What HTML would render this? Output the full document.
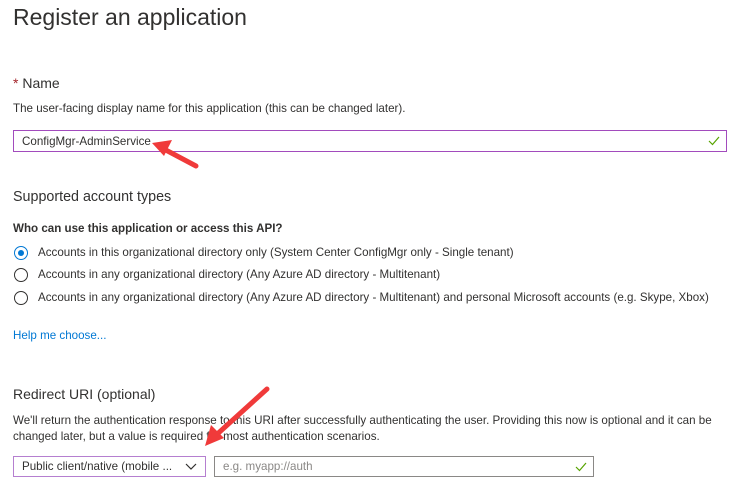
<!DOCTYPE html>
<html><head><style>
body{margin:0;width:740px;height:499px;background:#fff;font-family:"Liberation Sans",sans-serif;color:#323130;position:relative;overflow:hidden}
.a{position:absolute;white-space:nowrap}
.t{font-size:11.6px}
.box{position:absolute;border:1px solid #8a8886;box-sizing:border-box;font-size:11.6px}
.radio{position:absolute;width:14px;height:14px;border:1px solid #323130;border-radius:50%;box-sizing:border-box}
</style></head><body>
<div class="a" style="left:13px;top:4px;font-size:23px;">Register an application</div>
<div class="a" style="left:13px;top:75px;font-size:14px;"><span style="color:#a4262c">*</span> Name</div>
<div class="a t" style="left:13px;top:102px;">The user-facing display name for this application (this can be changed later).</div>
<div class="box" style="left:13px;top:130px;width:714px;height:22px;border-color:#a24bbd;">
<span class="a" style="left:8px;top:4px;">ConfigMgr-AdminService</span>
<svg class="a" style="right:6px;top:5px" width="12" height="10"><path d="M1 5 L4.5 8.5 L11 1" stroke="#57a300" stroke-width="1.2" fill="none"/></svg></div>
<div class="a" style="left:13px;top:189px;font-size:14.3px;">Supported account types</div>
<div class="a t" style="left:13px;top:222px;font-weight:bold;">Who can use this application or access this API?</div>
<div class="radio" style="left:14px;top:246px;border-color:#0078d4"><div style="position:absolute;left:3px;top:3px;width:6px;height:6px;border-radius:50%;background:#0078d4"></div></div>
<div class="a t" style="left:38px;top:246px;">Accounts in this organizational directory only (System Center ConfigMgr only - Single tenant)</div>
<div class="radio" style="left:14px;top:268px;"></div>
<div class="a t" style="left:38px;top:268px;">Accounts in any organizational directory (Any Azure AD directory - Multitenant)</div>
<div class="radio" style="left:14px;top:291px;"></div>
<div class="a t" style="left:38px;top:291px;">Accounts in any organizational directory (Any Azure AD directory - Multitenant) and personal Microsoft accounts (e.g. Skype, Xbox)</div>
<div class="a t" style="left:13px;top:329px;color:#0078d4;">Help me choose...</div>
<div class="a" style="left:13px;top:386px;font-size:14px;">Redirect URI (optional)</div>
<div class="a t" style="left:13px;top:413px;line-height:16px;">We'll return the authentication response to this URI after successfully authenticating the user. Providing this now is optional and it can be<br>changed later, but a value is required for most authentication scenarios.</div>
<div class="box" style="left:13px;top:456px;width:193px;height:21px;border-color:#b57fd0;">
<span class="a" style="left:8px;top:3px;">Public client/native (mobile ...</span>
<svg class="a" style="right:8px;top:6px" width="12" height="8"><path d="M1 1 L6 6 L11 1" stroke="#323130" stroke-width="1.2" fill="none"/></svg></div>
<div class="box" style="left:214px;top:456px;width:380px;height:21px;">
<span class="a" style="left:8px;top:3px;color:#8a8886">e.g. myapp://auth</span>
<svg class="a" style="right:6px;top:5px" width="12" height="10"><path d="M1 5 L4.5 8.5 L11 1" stroke="#57a300" stroke-width="1.2" fill="none"/></svg></div>
<svg class="a" style="left:0;top:0" width="740" height="499">
<g stroke="#f03a3a" stroke-width="5" stroke-linecap="round" fill="#f03a3a">
<line x1="196" y1="166" x2="162" y2="148"/>
<line x1="267" y1="389" x2="214" y2="437"/>
</g>
<polygon points="152,143 172,140 164,156" fill="#f03a3a"/>
<polygon points="205,446 211,425 224,438" fill="#f03a3a"/>
</svg>
</body></html>
